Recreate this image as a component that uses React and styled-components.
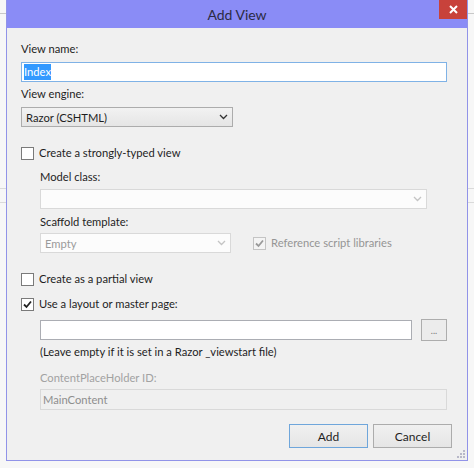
import React from 'react';
import styled, { createGlobalStyle } from 'styled-components';

const GlobalStyle = createGlobalStyle`
  body {
    margin: 0;
    background: #f7f7f7;
    font-family: 'Segoe UI', Lato, 'Open Sans', sans-serif;
  }
`;

function Checkbox({ checked, disabled }) {
  return (
    <Box disabled={disabled}>
      {checked && (
        <svg width="9" height="9" viewBox="0 0 9 9">
          <path d="M1 4.5 L3.5 7 L8 1.5" fill="none" stroke={disabled ? '#9a9a9a' : '#222'} strokeWidth="1.8" />
        </svg>
      )}
    </Box>
  );
}

function Chevron({ light }) {
  return (
    <svg width="9" height="6" viewBox="0 0 9 6">
      <path d="M1 1 L4.5 4.5 L8 1" fill="none" stroke={light ? '#c4c4c4' : '#333'} strokeWidth="1.3" />
    </svg>
  );
}

function App() {
  return (
    <Page>
      <GlobalStyle />
      <Window>
        <TitleBar>
          <span />
          <Title>Add View</Title>
          <CloseButton>
            <svg width="9" height="9" viewBox="0 0 9 9">
              <path d="M1 1 L8 8 M8 1 L1 8" stroke="#fff" strokeWidth="2" />
            </svg>
          </CloseButton>
        </TitleBar>
        <Body>
          <Label top={13}>View name:</Label>
          <TextInput top={5} focused>
            <Selected>Index</Selected>
          </TextInput>
          <Label top={4}>View engine:</Label>
          <Select top={5} width={212}>
            <span>Razor (CSHTML)</span>
            <Chevron />
          </Select>

          <CheckRow top={18}>
            <Checkbox />
            <span>Create a strongly-typed view</span>
          </CheckRow>
          <Indent>
            <Label top={8}>Model class:</Label>
            <Select top={4} width={387} disabled>
              <span />
              <Chevron light />
            </Select>
            <Label top={5}>Scaffold template:</Label>
            <ScaffoldRow>
              <Select width={191} disabled>
                <span>Empty</span>
                <Chevron light />
              </Select>
              <CheckRow disabled>
                <Checkbox checked disabled />
                <span>Reference script libraries</span>
              </CheckRow>
            </ScaffoldRow>
          </Indent>

          <CheckRow top={18}>
            <Checkbox />
            <span>Create as a partial view</span>
          </CheckRow>
          <CheckRow top={9}>
            <Checkbox checked />
            <span>Use a layout or master page:</span>
          </CheckRow>
          <Indent>
            <BrowseRow>
              <TextInput grow />
              <BrowseButton>...</BrowseButton>
            </BrowseRow>
            <Hint>(Leave empty if it is set in a Razor _viewstart file)</Hint>
            <Label top={10} disabled>ContentPlaceHolder ID:</Label>
            <TextInput top={3} tall disabled>MainContent</TextInput>
          </Indent>

          <Buttons>
            <Button primary>Add</Button>
            <Button>Cancel</Button>
          </Buttons>
        </Body>
        <Grip width="8" height="8" viewBox="0 0 8 8">
          {[[6, 0], [6, 3], [3, 3], [6, 6], [3, 6], [0, 6]].map(([x, y]) => (
            <rect key={`${x}-${y}`} x={x} y={y} width="2" height="2" fill="#b8b8c8" />
          ))}
        </Grip>
      </Window>
    </Page>
  );
}

const Page = styled.div`
  width: 474px;
  height: 468px;
  box-sizing: border-box;
  padding: 0 6px 7px 6px;
  background:
    linear-gradient(#c8c8c8, #c8c8c8) 0 13px / 100% 1px no-repeat,
    linear-gradient(#dadada, #dadada) 0 188px / 100% 1px no-repeat,
    linear-gradient(#dadada, #dadada) 0 202px / 100% 1px no-repeat,
    #f7f7f7;
  overflow: hidden;
`;

const Window = styled.div`
  position: relative;
  height: 100%;
  box-sizing: border-box;
  border: 1px solid #9193e8;
  border-top: none;
  background: #f0f0f0;
  display: flex;
  flex-direction: column;
`;

const TitleBar = styled.div`
  height: 28px;
  flex-shrink: 0;
  background: #8a8cf6;
  display: grid;
  grid-template-columns: 1fr auto 1fr;
  align-items: start;
`;

const Title = styled.div`
  font-size: 14px;
  line-height: 29px;
  color: #2b2b44;
`;

const CloseButton = styled.div`
  justify-self: end;
  width: 28px;
  height: 19px;
  background: #c8423b;
  display: flex;
  align-items: center;
  justify-content: center;
`;

const Body = styled.div`
  display: flex;
  flex-direction: column;
  padding: 0 20px 0 14px;
  font-size: 11.2px;
  color: #1e1e1e;
`;

const Label = styled.div`
  margin-top: ${(p) => p.top || 0}px;
  line-height: 16px;
  color: ${(p) => (p.disabled ? '#a2a2a2' : '#1e1e1e')};
`;

const TextInput = styled.div`
  margin-top: ${(p) => p.top || 0}px;
  flex: ${(p) => (p.grow ? 1 : 'none')};
  height: ${(p) => (p.tall ? 21 : 20)}px;
  box-sizing: border-box;
  padding: 0 2px;
  display: flex;
  align-items: center;
  background: ${(p) => (p.disabled ? '#f0f0f0' : '#fff')};
  border: 1px solid ${(p) => (p.focused ? '#7fb2e6' : p.disabled ? '#d9d9d9' : '#abadb3')};
  color: ${(p) => (p.disabled ? '#8e8e8e' : '#1e1e1e')};
`;

const Selected = styled.span`
  background: #3399ff;
  color: #fff;
  line-height: 16px;
`;

const Select = styled.div`
  margin-top: ${(p) => p.top || 0}px;
  width: ${(p) => p.width}px;
  height: 20px;
  box-sizing: border-box;
  padding: 0 4px 0 4px;
  display: flex;
  align-items: center;
  justify-content: space-between;
  border: 1px solid ${(p) => (p.disabled ? '#d9d9d9' : '#acacac')};
  background: ${(p) => (p.disabled ? '#fcfcfc' : 'linear-gradient(#f2f2f2, #e5e5e5)')};
  color: ${(p) => (p.disabled ? '#9a9a9a' : '#1e1e1e')};
`;

const CheckRow = styled.div`
  margin-top: ${(p) => p.top || 0}px;
  display: flex;
  align-items: center;
  gap: 5px;
  line-height: 16px;
  color: ${(p) => (p.disabled ? '#959595' : '#1e1e1e')};
`;

const Box = styled.div`
  width: 13px;
  height: 13px;
  box-sizing: border-box;
  border: 1px solid ${(p) => (p.disabled ? '#c4c4c4' : '#7a7a7a')};
  background: ${(p) => (p.disabled ? '#f4f4f4' : '#fff')};
  display: flex;
  align-items: center;
  justify-content: center;
`;

const Indent = styled.div`
  display: flex;
  flex-direction: column;
  padding-left: 19px;
`;

const ScaffoldRow = styled.div`
  margin-top: 3px;
  display: flex;
  align-items: center;
  gap: 22px;
`;

const BrowseRow = styled.div`
  margin-top: 7px;
  display: flex;
  align-items: center;
  gap: 9px;
`;

const BrowseButton = styled.div`
  width: 26px;
  height: 22px;
  box-sizing: border-box;
  border: 1px solid #adadad;
  background: #ececec;
  color: #777;
  font-size: 9px;
  display: flex;
  align-items: center;
  justify-content: center;
`;

const Hint = styled.div`
  margin-top: 3px;
  line-height: 16px;
`;

const Buttons = styled.div`
  margin-top: 14px;
  margin-right: -5px;
  display: flex;
  justify-content: flex-end;
  gap: 5px;
`;

const Button = styled.div`
  width: 79px;
  height: 24px;
  box-sizing: border-box;
  border: 1px solid ${(p) => (p.primary ? '#6fa6db' : '#acacac')};
  background: linear-gradient(#f0f0f0, #e5e5e5);
  display: flex;
  align-items: center;
  justify-content: center;
  font-size: 12px;
  color: #1e1e1e;
`;

const Grip = styled.svg`
  position: absolute;
  right: 2px;
  bottom: 2px;
`;

export default App;
